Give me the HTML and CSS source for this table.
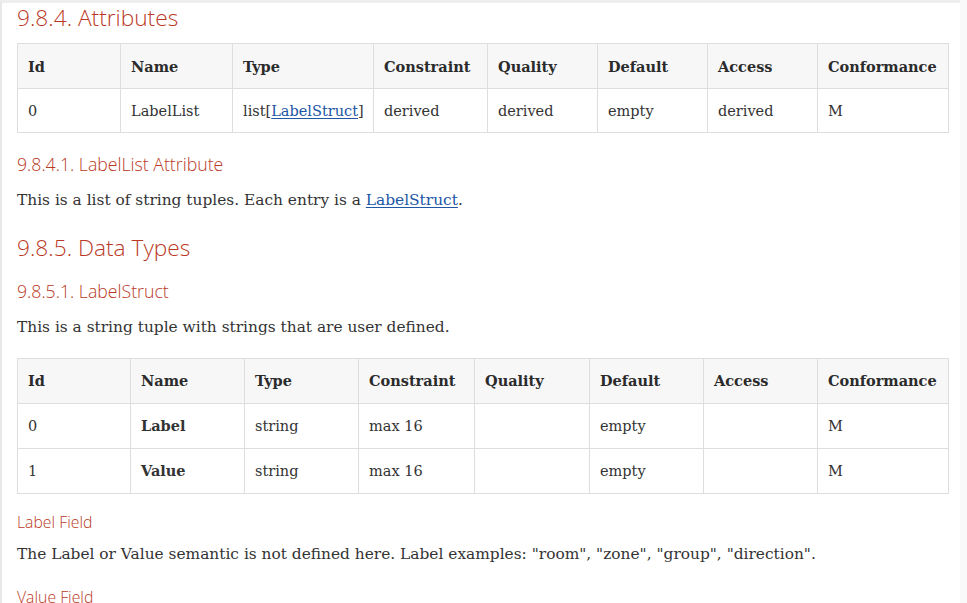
FILE: index.html
```html
<!DOCTYPE html>
<html>
<head>
<meta charset="utf-8">
<link rel="stylesheet" href="styles.css">
</head>
<body>
<div class="frame">
  <div class="content">
    <h3 class="h3 first">9.8.4. Attributes</h3>
    <table class="tbl t1">
      <colgroup>
        <col class="c103"><col class="c112"><col class="c141"><col class="c114"><col class="c110"><col class="c110"><col class="c110"><col class="c131">
      </colgroup>
      <thead>
        <tr><th>Id</th><th>Name</th><th>Type</th><th>Constraint</th><th>Quality</th><th>Default</th><th>Access</th><th>Conformance</th></tr>
      </thead>
      <tbody>
        <tr><td>0</td><td>LabelList</td><td>list[<a href="#labelstruct">LabelStruct</a>]</td><td>derived</td><td>derived</td><td>empty</td><td>derived</td><td>M</td></tr>
      </tbody>
    </table>
    <h4 class="h4 after-table">9.8.4.1. LabelList Attribute</h4>
    <p class="para">This is a list of string tuples. Each entry is a <a href="#labelstruct">LabelStruct</a>.</p>
    <h3 class="h3">9.8.5. Data Types</h3>
    <h4 class="h4" id="labelstruct">9.8.5.1. LabelStruct</h4>
    <p class="para">This is a string tuple with strings that are user defined.</p>
    <table class="tbl t2">
      <colgroup>
        <col class="c113"><col class="c114"><col class="c114"><col class="c116"><col class="c115"><col class="c114"><col class="c114"><col class="c131">
      </colgroup>
      <thead>
        <tr><th>Id</th><th>Name</th><th>Type</th><th>Constraint</th><th>Quality</th><th>Default</th><th>Access</th><th>Conformance</th></tr>
      </thead>
      <tbody>
        <tr><td>0</td><td><strong>Label</strong></td><td>string</td><td>max 16</td><td></td><td>empty</td><td></td><td>M</td></tr>
        <tr><td>1</td><td><strong>Value</strong></td><td>string</td><td>max 16</td><td></td><td>empty</td><td></td><td>M</td></tr>
      </tbody>
    </table>
    <h6 class="h6 after-table">Label Field</h6>
    <p class="para">The Label or Value semantic is not defined here. Label examples: "room", "zone", "group", "direction".</p>
    <h6 class="h6">Value Field</h6>
  </div>
</div>
</body>
</html>
```
FILE: styles.css
```css
html, body {
  margin: 0;
  padding: 0;
  background: #f9f9f9;
  height: 100%;
  overflow: hidden;
}
.frame {
  background: #ffffff;
  border-top: 3px solid #eeeeee;
  border-left: 2px solid #e8e8e8;
  margin-right: 7px;
  min-height: 100%;
}
.content {
  padding: 0 0 0 15px;
  width: 932px;
  font-family: "DejaVu Serif", "Liberation Serif", serif;
  color: #333333;
}
.h3, .h4, .h6 {
  font-family: "Open Sans", sans-serif;
  font-weight: 300;
  color: #ba3925;
  margin: 0;
  line-height: 1.2;
}
.h3 {
  font-size: 22.7px;
  margin-top: 21px;
  margin-bottom: 9px;
}
.h3.first {
  margin-top: 1px;
}
.h4 {
  font-size: 17.7px;
  margin-top: 19px;
  margin-bottom: 12px;
}
.h4.after-table {
  margin-top: 21px;
}
.h6 {
  font-size: 15.8px;
  margin-top: 21px;
  margin-bottom: 9px;
}
.h6.after-table {
  margin-top: 19px;
}
.para {
  font-size: 15.4px;
  line-height: 26px;
  margin: 0;
}
a {
  color: #2156a5;
  text-decoration: underline;
  text-underline-offset: 2px;
}
.tbl {
  border-collapse: collapse;
  table-layout: fixed;
  width: 930px;
  margin-top: 12px;
  font-size: 14.5px;
}
.t2 { margin-top: 18px; }
.tbl th, .tbl td {
  border: 1px solid #dedede;
  text-align: left;
  padding: 0 10px;
  vertical-align: middle;
}
.tbl th {
  background: #f7f7f8;
  font-weight: bold;
  color: #2b2b2b;
  height: 44px;
}
.tbl td {
  height: 43px;
}
.t2 td {
  height: 44px;
}
.c103 { width: 103px; }
.c110 { width: 110px; }
.c112 { width: 112px; }
.c113 { width: 113px; }
.c114 { width: 114px; }
.c115 { width: 115px; }
.c116 { width: 116px; }
.c131 { width: 131px; }
.c141 { width: 141px; }
```
